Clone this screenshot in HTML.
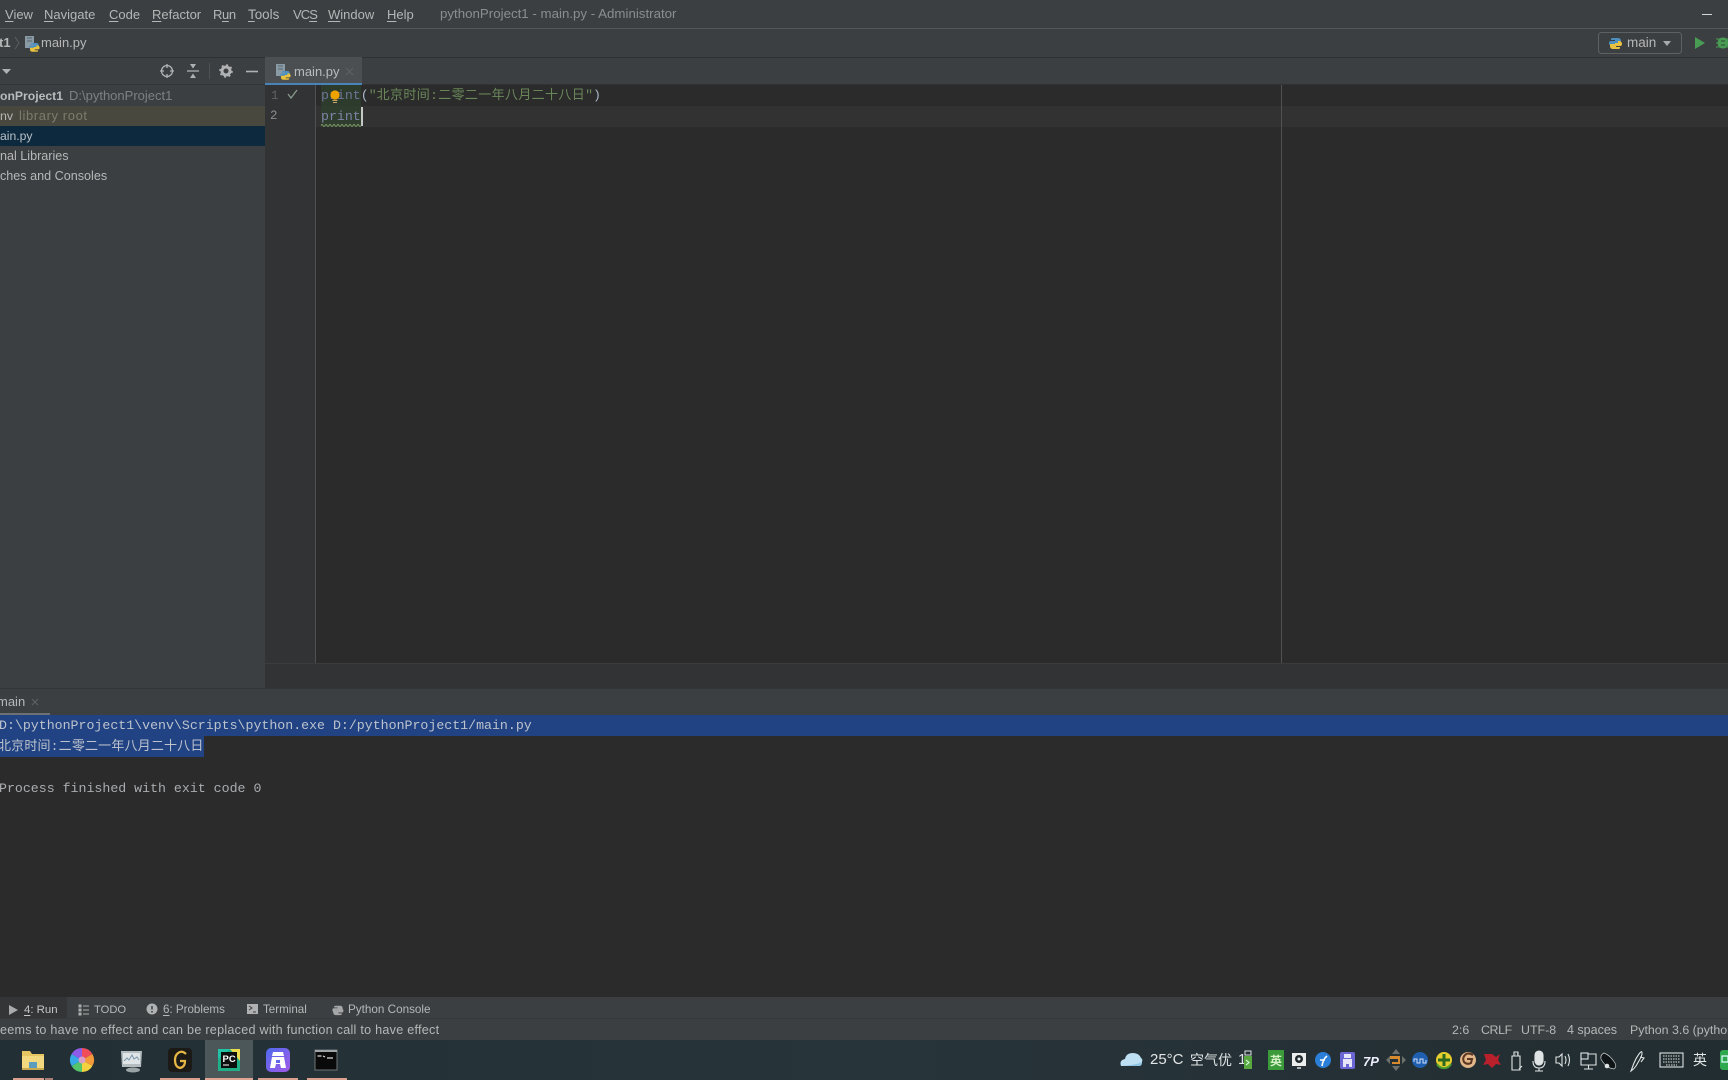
<!DOCTYPE html>
<html lang="zh"><head><meta charset="utf-8"><title>pythonProject1 - main.py</title>
<style>
html,body{margin:0;padding:0;background:#2b2b2b}
body{position:relative;width:1728px;height:1080px;overflow:hidden;font-family:"Liberation Sans","Noto Sans CJK SC",sans-serif;color:#b5b7b8}
div.b{position:absolute}
.t{position:absolute;white-space:nowrap;line-height:18px;height:18px;font-size:13px}
.m{font-size:13px;color:#b4b6b7}
.mono{font-family:"Liberation Mono","Noto Sans CJK SC",monospace;font-size:13.25px;letter-spacing:0}
.cj{font-size:13px;letter-spacing:.17px}
.cj2{font-size:13px;letter-spacing:.35px}
u{text-decoration-thickness:1px;text-underline-offset:2px}
svg{position:absolute;left:0;top:0}
</style></head><body>
<!-- panels -->
<div class="b" style="left:0;top:0;width:1728px;height:28px;background:#3c3f41"></div>
<div class="b" style="left:0;top:28px;width:1728px;height:1px;background:#55585a"></div>
<div class="b" style="left:0;top:29px;width:1728px;height:28px;background:#3c3f41"></div>
<div class="b" style="left:0;top:57px;width:1728px;height:1px;background:#2e3031"></div>
<div class="b" style="left:0;top:58px;width:1728px;height:27px;background:#3c3f41"></div>
<div class="b" style="left:0;top:84px;width:265px;height:1px;background:#333537"></div>
<div class="b" style="left:0;top:85px;width:265px;height:603px;background:#3c3f41"></div>
<div class="b" style="left:0;top:106px;width:265px;height:20px;background:#49483e"></div>
<div class="b" style="left:0;top:126px;width:265px;height:20px;background:#0d293e"></div>
<div class="b" style="left:265px;top:57px;width:97px;height:26px;background:#4b4f51"></div>
<div class="b" style="left:265px;top:83px;width:97px;height:3px;background:#4a83b8"></div>
<div class="b" style="left:265px;top:85px;width:51px;height:578px;background:#313335"></div>
<div class="b" style="left:316px;top:85px;width:1412px;height:578px;background:#2b2b2b"></div>
<div class="b" style="left:362px;top:84px;width:1366px;height:1px;background:#323232"></div>
<div class="b" style="left:316px;top:106px;width:1412px;height:21px;background:#323232"></div>
<div class="b" style="left:315px;top:85px;width:1px;height:578px;background:#4f5152"></div>
<div class="b" style="left:1281px;top:85px;width:1px;height:578px;background:#4f5152"></div>
<div class="b" style="left:265px;top:663px;width:1463px;height:25px;background:#313335"></div>
<div class="b" style="left:265px;top:663px;width:1463px;height:1px;background:#3a3c3e"></div>
<div class="b" style="left:0;top:688px;width:1728px;height:27px;background:#3c3f41"></div>
<div class="b" style="left:0;top:688px;width:1728px;height:1px;background:#323436"></div>
<div class="b" style="left:0;top:713px;width:50px;height:2px;background:#6c7173"></div>
<div class="b" style="left:0;top:715px;width:1728px;height:282px;background:#2b2b2b"></div>
<div class="b" style="left:0;top:715px;width:1728px;height:21px;background:#214283"></div>
<div class="b" style="left:0;top:736px;width:204px;height:21px;background:#214283"></div>
<div class="b" style="left:0;top:997px;width:1728px;height:22px;background:#3c3f41"></div>
<div class="b" style="left:0;top:997px;width:67px;height:22px;background:#333537"></div>
<div class="b" style="left:0;top:1019px;width:1728px;height:21px;background:#3c3f41"></div>
<div class="b" style="left:0;top:1018px;width:1728px;height:1px;background:#363839"></div>
<div class="b" style="left:0;top:1040px;width:1728px;height:40px;background:linear-gradient(90deg,#223036,#27343a 50%,#222d31)"></div>
<div class="b" style="left:205px;top:1040px;width:48px;height:40px;background:#4c5759"></div>
<!-- taskbar indicators -->
<div class="b" style="left:13px;top:1078px;width:31px;height:2px;background:#d9a08e"></div>
<div class="b" style="left:45px;top:1078px;width:8px;height:2px;background:#a87e74"></div>
<div class="b" style="left:160px;top:1078px;width:40px;height:2px;background:#d9a08e"></div>
<div class="b" style="left:205px;top:1078px;width:48px;height:2px;background:#e0a693"></div>
<div class="b" style="left:258px;top:1078px;width:40px;height:2px;background:#d9a08e"></div>
<div class="b" style="left:307px;top:1078px;width:40px;height:2px;background:#d9a08e"></div>

<!-- menu -->
<span class="t m" style="left:5px;top:6px"><u>V</u>iew</span>
<span class="t m" style="left:44px;top:6px"><u>N</u>avigate</span>
<span class="t m" style="left:109px;top:6px"><u>C</u>ode</span>
<span class="t m" style="left:152px;top:6px"><u>R</u>efactor</span>
<span class="t m" style="left:213px;top:6px;letter-spacing:-.4px">R<u>u</u>n</span>
<span class="t m" style="left:248px;top:6px;font-size:13.4px"><u>T</u>ools</span>
<span class="t m" style="left:293px;top:6px;letter-spacing:-.9px">VC<u>S</u></span>
<span class="t m" style="left:328px;top:6px"><u>W</u>indow</span>
<span class="t m" style="left:387px;top:6px"><u>H</u>elp</span>
<span class="t" style="left:440px;top:5px;color:#8b8e90;font-size:13.3px">pythonProject1 - main.py - Administrator</span>
<!-- breadcrumbs -->
<b class="t" style="left:-1px;top:34px;font-size:13px">t1</b>
<span class="t" style="left:41px;top:34px">main.py</span>
<span class="t" style="left:1627px;top:34px;font-size:13.5px">main</span>
<!-- tree -->
<b class="t" style="left:0;top:87px;color:#b9bbbc;font-size:12.2px">onProject1</b>
<span class="t" style="left:69px;top:87px;color:#7d8082">D:\pythonProject1</span>
<span class="t" style="left:0;top:107px;color:#b5b7b8;font-size:12.4px">nv</span>
<span class="t" style="left:19px;top:107px;color:#7d7c6e;letter-spacing:.6px">library root</span>
<span class="t" style="left:0;top:127px;color:#b9c0c6;font-size:12.2px">ain.py</span>
<span class="t" style="left:0;top:147px;font-size:12.6px">nal Libraries</span>
<span class="t" style="left:0;top:167px;font-size:12.6px">ches and Consoles</span>
<!-- tab -->
<span class="t" style="left:294px;top:63px;color:#b9bbbc">main.py</span>
<!-- editor -->
<div class="b" style="left:321px;top:85px;width:40px;height:21px;background:#2d3b2c"></div>
<div class="b" style="left:321px;top:106px;width:40px;height:21px;background:#2f3d2e"></div>
<span class="t mono" style="left:271px;top:87px;color:#606366;font-size:12.5px">1</span>
<span class="t mono" style="left:270px;top:107px;color:#8a8c8e;font-size:12.5px">2</span>
<span class="t mono" style="left:321px;top:87px;color:#6f7399">pr<span style="color:#6f7399">int</span><span style="color:#a9b7c6">(</span><span style="color:#6a8759">"<span class="cj2">北京时间:二零二一年八月二十八日</span>"</span><span style="color:#a9b7c6">)</span></span>
<span class="t mono" style="left:321px;top:108px;color:#7f83a8">print</span>
<div class="b" style="left:361px;top:107px;width:2px;height:19px;background:#c5c8c6"></div>
<!-- run -->
<span class="t" style="left:-3px;top:693px;color:#b5b7b8">main</span>
<span class="t mono" style="left:-1px;top:717px;color:#bcc3cc">D:\pythonProject1\venv\Scripts\python.exe D:/pythonProject1/main.py</span>
<span class="t mono cj" style="left:-2px;top:738px;color:#bcc3cc">北京时间:二零二一年八月二十八日</span>
<span class="t mono" style="left:-1px;top:780px;color:#a9adb0">Process finished with exit code 0</span>
<!-- bottom bar -->
<span class="t" style="left:24px;top:1001px;font-size:11.4px;color:#c5c7c8"><u>4</u>: Run</span>
<span class="t" style="left:94px;top:1001px;font-size:11.2px">TODO</span>
<span class="t" style="left:163px;top:1001px;font-size:11.6px"><u>6</u>: Problems</span>
<span class="t" style="left:263px;top:1001px;font-size:11.6px">Terminal</span>
<span class="t" style="left:348px;top:1001px;font-size:11.7px">Python Console</span>
<span class="t" style="left:0;top:1021px;font-size:12.6px;letter-spacing:.26px">eems to have no effect and can be replaced with function call to have effect</span>
<span class="t" style="left:1452px;top:1021px;font-size:12.4px">2:6</span>
<span class="t" style="left:1481px;top:1021px;font-size:12.4px;letter-spacing:-.4px">CRLF</span>
<span class="t" style="left:1521px;top:1021px;font-size:12.4px">UTF-8</span>
<span class="t" style="left:1567px;top:1021px;font-size:12.5px">4 spaces</span>
<span class="t" style="left:1630px;top:1021px;font-size:12.4px">Python 3.6 (python</span>
<!-- tray text -->
<span class="t" style="left:1150px;top:1051px;font-size:15px;color:#e3e6e6">25°C</span>
<span class="t" style="left:1190px;top:1051px;font-size:14px;color:#dfe3e3">空气优</span>
<span class="t" style="left:1238px;top:1051px;font-size:15px;color:#e3e6e6">1</span>
<span class="t" style="left:1693px;top:1051px;font-size:14px;color:#e3e6e6">英</span>

<svg width="1728" height="1080" viewBox="0 0 1728 1080">
<defs>
<g id="py"><path d="M-1-6h3q3 0 3 3v2h-5v1h-3v2h-2q-2-1-2-3 0-2 2-2h4v-1h-4v-1q0-1 2-1z" fill="#4d8fbf" transform="translate(1,1)"/><path d="M1 6h-3q-3 0-3-3v-2h5v-1h3v-2h2q2 1 2 3 0 2-2 2h-4v1h4v1q0 1-2 1z" fill="#e8c23e"/></g>
<g id="pyf"><path d="M-7-8h9v12h-9z" fill="#8a9ba6"/><path d="M-5-6h5M-5-3h5" stroke="#56666f"/><g transform="translate(2,3) scale(.8)"><use href="#py"/></g></g>
</defs>
<!-- nav -->
<path d="M15 37l4 6-4 6" fill="none" stroke="#5c5f61"/>
<use href="#pyf" x="32" y="44"/>
<rect x="1598.5" y="32.5" width="83" height="21" rx="3" fill="none" stroke="#5d6163"/>
<use href="#py" x="1615" y="43"/>
<path d="M1663 41h8l-4 5z" fill="#a8abad"/>
<path d="M1695 37l10 6-10 6z" fill="#499c54"/>
<circle cx="1723" cy="43" r="5.5" fill="#499c54"/><path d="M1716 39l14 0M1716 43h14M1716 47h14" stroke="#499c54"/><path d="M1721 41h4M1721 45h4" stroke="#2b4a2e"/>
<path d="M1702 14.5h10" stroke="#d5d7d8"/>
<!-- project toolbar -->
<path d="M2 69h9l-4.500 5z" fill="#afb1b3"/>
<circle cx="167" cy="71" r="5.500" fill="none" stroke="#afb1b3" stroke-width="1.300"/><path d="M167 64v4M167 74v4M160 71h4M170 71h4" stroke="#afb1b3" stroke-width="1.300"/>
<path d="M187 71h12" stroke="#afb1b3" stroke-width="1.300"/><path d="M190 64h6l-3 4.500zM190 78h6l-3-4.500z" fill="#afb1b3"/>
<path d="M209.500 63v16" stroke="#4e5254"/>
<circle cx="226" cy="71" r="4" fill="none" stroke="#afb1b3" stroke-width="3"/><circle cx="226" cy="71" r="6" fill="none" stroke="#afb1b3" stroke-width="1.600" stroke-dasharray="2 2.700"/>
<path d="M246 71.500h12" stroke="#afb1b3" stroke-width="1.600"/>
<!-- tab icon -->
<use href="#pyf" x="283" y="72"/>
<path d="M346 68l7 7M353 68l-7 7" stroke="#5f6365"/>
<!-- editor marks -->
<path d="M288 94l3 4 6-8" fill="none" stroke="#8a9a8c" stroke-width="1.300"/>
<circle cx="335" cy="95" r="4.600" fill="#eda200"/><path d="M332.500 100.500h5M333 102.500h4" stroke="#c7a46b"/>
<path d="M321 125.500q1-2 2 0t2 0 2 0 2 0 2 0 2 0 2 0 2 0 2 0 2 0 2 0 2 0 2 0 2 0 2 0 2 0 2 0 2 0 2 0 2 0" fill="none" stroke="#7f9a68" stroke-width=".9"/>
<path d="M32 699l6 6M38 699l-6 6" stroke="#5f6365"/>
<!-- bottom icons -->
<path d="M9 1005l9 5-9 5z" fill="#a9abad"/>
<path d="M79 1005h2v2h-2zM79 1009h2v2h-2zM79 1013h2v2h-2zM83 1006h6M83 1010h6M83 1014h6" stroke="#adafb0" fill="#adafb0"/>
<circle cx="152" cy="1009" r="5.500" fill="#afb1b3"/><path d="M152 1006v3.500M152 1011v1.500" stroke="#3c3f41" stroke-width="1.500"/>
<rect x="247" y="1004" width="11" height="10" fill="#afb1b3"/><path d="M249 1006l3 2-3 2M253 1012h3" fill="none" stroke="#3c3f41"/>
<g transform="translate(337.500,1010) scale(.85)"><path d="M-1-6h3q3 0 3 3v2h-5v1h-3v2h-2q-2-1-2-3 0-2 2-2h4v-1h-4v-1q0-1 2-1z" fill="#a5a7a9" transform="translate(1,1)"/><path d="M1 6h-3q-3 0-3-3v-2h5v-1h3v-2h2q2 1 2 3 0 2-2 2h-4v1h4v1q0 1-2 1z" fill="#a5a7a9"/></g>
<!-- taskbar: folder -->
<path d="M22 1051h8l2 3h12v16H22z" fill="#e6c662"/><path d="M22 1056h22v14H22z" fill="#f2d97f"/><path d="M29 1062h8v8h-8z" fill="#5b9dbe"/><path d="M22 1068h22v2H22z" fill="#c9a94f"/>
<!-- colourful pinwheel -->
<g transform="translate(82,1060)">
<path d="M0 0L0-12A12 12 0 0 1 10.400-6z" fill="#f04c5a"/><path d="M0 0L10.400-6A12 12 0 0 1 10.400 6z" fill="#f59a3b"/><path d="M0 0L10.400 6A12 12 0 0 1 0 12z" fill="#f4d23f"/><path d="M0 0L0 12A12 12 0 0 1-10.400 6z" fill="#55c56b"/><path d="M0 0L-10.400 6A12 12 0 0 1-10.400-6z" fill="#37a8e6"/><path d="M0 0L-10.400-6A12 12 0 0 1 0-12z" fill="#8e5be8"/><circle r="3.500" fill="#d8a0c8"/>
</g>
<!-- resource monitor -->
<path d="M121 1051l21 0-1 16h-19z" fill="#b4bcc0"/><path d="M123 1053h17v11h-17z" fill="#dfe4e6"/><path d="M124 1061l3-3 2 2 3-5 2 4 3-2 2 3" fill="none" stroke="#7c96ab"/><ellipse cx="133" cy="1070" rx="7" ry="2.500" fill="#9aa3a6"/>
<!-- G -->
<rect x="168" y="1048" width="24" height="24" rx="4" fill="#1c1a17"/><path d="M186 1054q-3-3-6-2-5 2-5 8 0 7 5 8 5-1 5-7h-5" fill="none" stroke="#e5b744" stroke-width="2.200"/>
<!-- PC -->
<rect x="218" y="1049" width="22" height="22" fill="#20b088"/><path d="M218 1049h12l-12 10z" fill="#22c4a8"/><path d="M230 1049h10v12z" fill="#eddb4d"/><rect x="221" y="1052" width="16" height="16" fill="#0c0f0e"/><text x="222.500" y="1062" font-family="Liberation Sans" font-size="9.500" font-weight="700" fill="#fff">PC</text><path d="M223 1065h6" stroke="#fff"/>
<!-- blue app -->
<defs><linearGradient id="g1" x1="0" y1="0" x2="1" y2="1"><stop offset="0" stop-color="#4f6bf0"/><stop offset="1" stop-color="#a15ae6"/></linearGradient></defs>
<rect x="266" y="1048" width="24" height="24" rx="5" fill="url(#g1)"/><path d="M273 1052h10l1 4h-12zM272 1057h12l2 11h-5l-1-4h-4l-1 4h-5z" fill="#fff"/><path d="M276 1060h4v3h-4z" fill="#6266ea"/>
<!-- cmd -->
<rect x="315" y="1050" width="22" height="20" fill="#0a0a0a" stroke="#6f7476"/><path d="M315 1050h22v2h-22z" fill="#9fa4a6"/><path d="M317.500 1056h4M323 1056l2 1M327 1058h6" stroke="#dcdcdc" stroke-width="1.200"/>
<!-- tray left -->
<path d="M1121 1066q-2-6 4-7 1-6 8-6 6 0 8 5 2 1 1 4 0 4-3 4z" fill="#bfe0f2"/><path d="M1121 1066h18q3 0 3-4-6 3-21 4z" fill="#8fc3e2"/>
<rect x="1244" y="1056" width="8" height="13" fill="#59a83f"/><path d="M1245 1051h6v4h-6z" fill="none" stroke="#e0e3e3"/><path d="M1246 1060l3 2.500-3 2.500" fill="none" stroke="#dfe"/>
<rect x="1268" y="1050" width="16" height="20" fill="#3b9a3a"/><text x="1270" y="1065" font-family="Noto Sans CJK SC" font-size="12" font-weight="700" fill="#d6f0c8">英</text>
<rect x="1292" y="1053" width="14" height="13" fill="#eceeee"/><circle cx="1299" cy="1059" r="4" fill="#1f2a2e"/><circle cx="1299" cy="1059" r="1.500" fill="#eceeee"/><path d="M1297 1068h4" stroke="#eceeee" stroke-width="1.400"/>
<circle cx="1323" cy="1060" r="8" fill="#2b7fd8"/><path d="M1322 1066q1-7 5-10M1320 1060h5" stroke="#fff" stroke-width="1.600" fill="none"/>
<rect x="1340" y="1052" width="15" height="17" rx="2" fill="#6a66d4"/><path d="M1344 1054h7v4h-7zM1343 1059h9v8h-3v-3h-3v3h-3z" fill="#e6e6f8"/>
<text x="1363" y="1066" font-family="Liberation Sans" font-size="13" font-weight="700" font-style="italic" fill="#eef">7P</text>
<path d="M1396 1049l4 5h-8zM1396 1071l4-5h-8zM1386 1060l4-4v8zM1406 1060l-4-4v8z" fill="#6d6f6b"/><path d="M1390 1056h10v8h-8v-2h6v-3h-8z" fill="#d98a2e"/>
<circle cx="1420" cy="1060" r="8" fill="#1f5fb0"/><path d="M1414 1062v-3h3v4h3v-4h3v4h3v-3" fill="none" stroke="#cfe2ff"/>
<circle cx="1444" cy="1060" r="8" fill="#e4cf2e"/><path d="M1444 1054v12M1438 1060h12" stroke="#2d6a1f" stroke-width="3"/><path d="M1437 1064a8 8 0 0 0 14 0" fill="none" stroke="#4e9d2f" stroke-width="2"/>
<circle cx="1468" cy="1060" r="8" fill="#e3b68a"/><path d="M1473 1055q-5-3-8 0-3 3-1 7 3 3 7 1l1-4h-5" fill="none" stroke="#5a3520" stroke-width="2"/>
<path d="M1492 1054l4 3 4-3-2 6 3 5-5-1-4 4-4-4-5 1 3-5-2-6z" fill="#b8202c"/>
<!-- tray right -->
<g fill="none" stroke="#dfe3e3" stroke-width="1.100">
<path d="M1512 1056h8v14h-8zM1514 1056v-4h4v4M1515 1054h.5M1517 1054h.5M1522 1066l-3 3"/>
<rect x="1535" y="1051" width="8" height="14" rx="4" fill="#dfe3e3"/><path d="M1533 1061q0 7 6 7t6-7M1539 1068v3M1535 1071h8"/>
<path d="M1556 1057h3l3-3v12l-3-3h-3zM1565 1056q2 4 0 8M1568 1054q3 6 0 12"/>
<path d="M1581 1054h15v11h-15zM1588.500 1065v4M1584 1069h9"/><rect x="1581" y="1053" width="7" height="6" fill="#27343a"/>
<path d="M1631 1071l3-8q2-5 5-9t3-1q0 3-2 6l-4 7q-2 3-5 5zM1640 1057l4 1-3 4"/>
<rect x="1660" y="1053" width="23" height="14"/><path d="M1663 1056h17M1663 1059h17M1663 1062h17M1666 1065h11" stroke-dasharray="1.500 1"/>
</g>
<path d="M1604 1053q6 2 11 10 2 4-1 6l-4-1q-6-3-9-9-1-4 3-6z" fill="#0f1416" stroke="#c8cccc" stroke-width=".7"/><circle cx="1607" cy="1066" r="2.300" fill="#dfe3e3"/>
<rect x="1720" y="1050" width="12" height="20" rx="3" fill="#2fa84f"/><path d="M1722 1056h6v6h-6z" fill="none" stroke="#dff" stroke-width="1.200"/>
</svg>
</body></html>
